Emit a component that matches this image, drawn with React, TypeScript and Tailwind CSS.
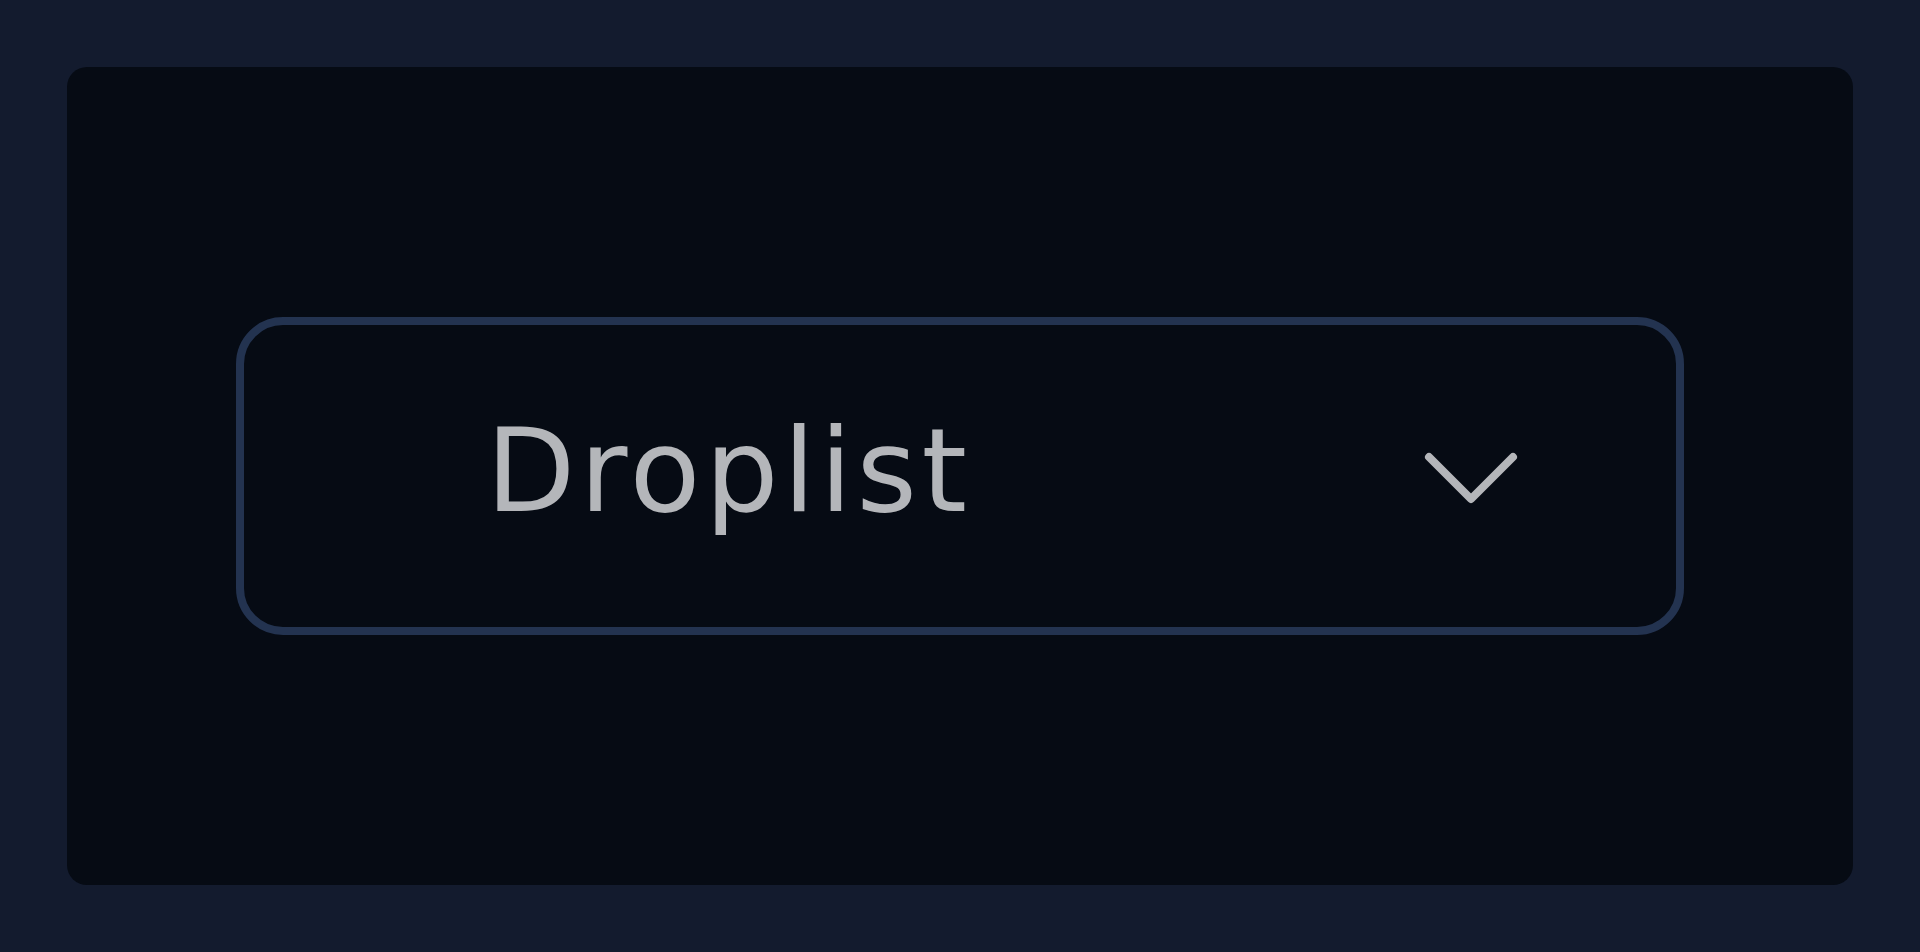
import React from "react";

const App = () => {
  return (
    <div className="h-screen w-full bg-[#131b2e] p-[67px]">
      <div className="flex h-full w-full items-center justify-center rounded-[20px] bg-[#060b14]">
        <button
          type="button"
          className="flex h-[318px] w-[1448px] items-center justify-between rounded-[47px] border-[8px] border-[#233350] pl-[242px] pr-[155px]"
        >
          <span
            className="text-[116px] leading-none tracking-[4.5px] text-[#b4b6ba] -mt-[10px]"
            style={{ fontFamily: '"DejaVu Sans", sans-serif' }}
          >
            Droplist
          </span>
          <svg
            width="100"
            height="58"
            viewBox="0 0 100 58"
            fill="none"
            className="mt-[3px]"
          >
            <path
              d="M8 8 L50 50 L92 8"
              stroke="#b4b6ba"
              strokeWidth="8"
              strokeLinecap="round"
              strokeLinejoin="round"
            />
          </svg>
        </button>
      </div>
    </div>
  );
};

export default App;
